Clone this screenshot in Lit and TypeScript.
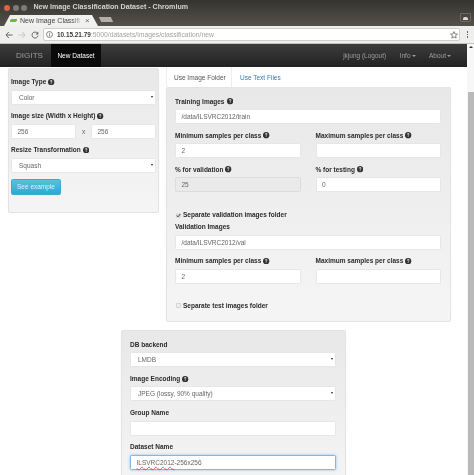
import { LitElement, html, css } from "lit";
import { customElement } from "lit/decorators.js";

const help = html`<svg class="help" viewBox="0 0 12 12"><circle cx="6" cy="6" r="6" fill="#333"/><path d="M3.900 4.700C3.900 3.400 4.800 2.600 6.100 2.600S8.200 3.400 8.200 4.500C8.200 6 6.700 6 6.700 7.200H5.300C5.300 5.400 6.800 5.400 6.800 4.600 6.800 4.200 6.500 3.900 6.100 3.900 5.600 3.900 5.300 4.200 5.300 4.700Z" fill="#f0f0f0"/><rect x="5.300" y="7.800" width="1.400" height="1.400" fill="#f0f0f0"/></svg>`;

@customElement("app-root")
export class AppRoot extends LitElement {
  static styles = css`
    :host { display: block; width: 474px; height: 475px; overflow: hidden; font-family: "Liberation Sans", Arial, sans-serif; background: #fff; color: #333; filter: blur(.3px); }
    * { box-sizing: border-box; }
    .chrome { height: 26px; background: linear-gradient(#35342f, #54524a); position: relative; }
    .title { height: 15px; display: flex; align-items: center; padding-left: 4px; gap: 2.500px; color: #d6d4ce; font: bold 7.100px/15px "Liberation Sans", sans-serif; }
    .dot { width: 6px; height: 6px; border-radius: 50%; background: #7d7c75; }
    .dot.close { background: #dc6440; }
    .title span { margin-left: 4px; white-space: nowrap; }
    .tabs { height: 11px; display: flex; align-items: flex-end; position: relative; }
    .tab { margin-left: 4px; width: 94px; height: 11px; background: #f1f1ef; clip-path: polygon(0 100%, 6px 0, calc(100% - 6px) 0, 100% 100%); display: flex; align-items: center; padding-left: 6px; color: #444; font: 7px/11px "Liberation Sans", sans-serif; white-space: nowrap; }
    .fav { width: 7px; height: 3.500px; background: #76b82a; border-radius: 2px 0 2px 0; margin-right: 3px; flex: none; }
    .tab .name { width: 64px; overflow: hidden; -webkit-mask-image: linear-gradient(90deg, #000 80%, transparent); mask-image: linear-gradient(90deg, #000 80%, transparent); }
    .tab .x { margin-left: 1px; color: #666; font-size: 8px; }
    .newtab { width: 12px; height: 5px; background: #b0afa9; margin: 0 0 4px 2px; transform: skewX(25deg); }
    .profile { position: absolute; right: 3px; top: -2px; width: 11px; height: 9px; border: 1px solid #6a6860; border-radius: 1px; display: flex; justify-content: center; align-items: flex-end; padding-bottom: 1px; }
    .profile i { width: 5px; height: 3px; background: #ddd; border-radius: 2px 2px 0 0; }
    .toolbar { height: 18px; background: #efefed; border-bottom: 1px solid #c2c2c0; display: flex; align-items: center; padding-left: 5px; gap: 5px; }
    .nav-ic { width: 8px; height: 8px; flex: none; }
    .addr { flex: 1; height: 13px; margin-left: -1px; background: #fff; border: 1px solid #cfcfcd; border-radius: 2px; display: flex; align-items: center; padding-left: 2px; font-size: 6.800px; color: #a3a3a3; white-space: nowrap; }
    .addr b { font: bold 6.400px "Liberation Sans", sans-serif; color: #3c3c3c; }
    .info { width: 7px; height: 7px; margin-right: 4px; flex: none; }
    .star { width: 8px; height: 8px; margin: 0 1px 0 auto; flex: none; }
    .menu { width: 14px; margin-left: -5px; padding-left: 1px; display: flex; flex-direction: column; align-items: center; gap: 1px; }
    .menu i { width: 1.500px; height: 1.500px; background: #666; }
    .viewport { display: flex; height: 431px; overflow: hidden; }
    .page { width: 467px; flex: none; }
    .scroll { flex: 1; background: #f7f7f7; position: relative; }
    .thumb { position: absolute; top: 48px; left: 1px; right: 0; bottom: 0; background: #b9b9b9; }
    .up { position: absolute; top: 2px; left: 1.500px; border: 2px solid transparent; border-bottom: 2.500px solid #333; border-top: 0; }
    .navbar { height: 23px; background: linear-gradient(#3c3c3c, #222); display: flex; align-items: stretch; font-size: 6.500px; color: #9d9d9d; white-space: nowrap; }
    .brand { font-size: 8.100px; padding: 0 8px 0 16px; display: flex; align-items: center; }
    .active { width: 50px; background: #0a0a0a; color: #fff; display: flex; align-items: center; justify-content: center; }
    .nav-r { margin-left: auto; display: flex; align-items: center; gap: 13.500px; padding-right: 16px; }
    .caret { display: inline-block; border: 2px solid transparent; border-top: 2px solid #9d9d9d; border-bottom: 0; margin-left: 1px; vertical-align: middle; }
    .top { display: flex; align-items: flex-start; padding-left: 8px; gap: 7px; }
    .well { background: linear-gradient(#e8e8e8, #f5f5f5); border: 1px solid #e3e3e3; border-radius: 2px; box-shadow: 0 1px 0 rgba(255,255,255,.6), 0 0 1px rgba(0,0,0,.08); }
    .left { width: 151px; height: 145px; margin-top: 1px; padding: 8px 2px 0 2px; }
    .right { width: 285px; }
    .lbl { display: flex; align-items: center; gap: 2px; height: 10px; font: bold 6.500px/10px "Liberation Sans", sans-serif; color: #2b2b2b; white-space: nowrap; }
    .help { width: 6.300px; height: 6.300px; flex: none; }
    .field { margin-bottom: 6.500px; }
    .field .ctl, .field .group { margin-top: 2.500px; }
    .ctl { height: 15px; background: #fff; border: 1px solid #e6e6e6; border-radius: 1.500px; display: flex; align-items: center; padding-left: 5.500px; font-size: 6.500px; color: #666; white-space: nowrap; }
    .ctl.sel { padding-left: 7px; position: relative; }
    .ctl.sel::after { content: ""; position: absolute; right: 2px; top: 5px; border: 1.500px solid transparent; border-top: 2.500px solid #222; border-bottom: 0; }
    .ctl.dis { background: #eaeaea; border-color: #dcdcdc; }
    .ctl.focus { border-color: #83b7e0; box-shadow: 0 0 3px rgba(102,175,233,.7); }
    .group { display: flex; }
    .group .ctl { flex: 1; margin-top: 0; }
    .addon { width: 15px; height: 15px; flex: none; background: #eee; display: flex; align-items: center; justify-content: center; font-size: 6.500px; color: #666; }
    .btn { margin-top: 1px; width: 50px; height: 15.500px; background: linear-gradient(#5bc0de, #2aabd2); border: 1px solid #3ca9cd; border-radius: 1.500px; color: #dff2f9; font-size: 6.500px; display: flex; align-items: center; justify-content: center; white-space: nowrap; }
    .tablist { display: flex; height: 20px; font-size: 6.500px; white-space: nowrap; }
    .t { display: flex; align-items: center; color: #337ab7; padding: 0 8px; }
    .t.on { color: #555; width: 66px; padding: 0 0 0 7px; background: #fff; border: 1px solid #eee; border-width: 0 1px; }
    .pane { padding: 8.500px 9px 10px 8px; }
    .pane .field { margin-bottom: 6.500px; }
    .pane .field.last { margin-bottom: 0; }
    .two { display: grid; grid-template-columns: 1fr 1fr; column-gap: 15px; }
    .chk { display: flex; align-items: center; gap: 2px; height: 10px; padding-left: 1px; font: bold 6.500px/10px "Liberation Sans", sans-serif; color: #2b2b2b; white-space: nowrap; }
    .box { width: 5px; height: 5px; flex: none; }
    .chk.val { margin-top: 18px; margin-bottom: 2px; }
    .chk.test { margin-top: 17px; }
    .lower { width: 225px; margin: 8px 0 0 121px; padding: 9px 9px 12px 8px; }
    .lower .field { margin-bottom: 6.800px; }
    .squig { text-decoration: underline wavy #d9534f .4px; }
  `;

  render() {
    return html`
      <div class="chrome">
        <div class="title"><i class="dot close"></i><i class="dot"></i><i class="dot"></i><span>New Image Classification Dataset - Chromium</span></div>
        <div class="tabs">
          <div class="tab"><i class="fav"></i><span class="name">New Image Classifi</span><span class="x">×</span></div>
          <div class="newtab"></div>
          <div class="profile"><i></i></div>
        </div>
      </div>
      <div class="toolbar">
        <svg class="nav-ic" viewBox="0 0 8 8"><path d="M7.500 4H1M3.800 1 1 4l2.800 3" fill="none" stroke="#666" stroke-width="1"/></svg>
        <svg class="nav-ic" viewBox="0 0 8 8"><path d="M.5 4H7M4.200 1 7 4 4.200 7" fill="none" stroke="#c6c6c6" stroke-width="1"/></svg>
        <svg class="nav-ic" viewBox="0 0 8 8"><path d="M6.500 2.300A3 3 0 1 0 7 4.600" fill="none" stroke="#666" stroke-width="1"/><path d="M7.300.6v2.800H4.500z" fill="#666"/></svg>
        <div class="addr">
          <svg class="info" viewBox="0 0 8 8"><circle cx="4" cy="4" r="3.400" fill="none" stroke="#555" stroke-width=".8"/><path d="M4 3.500v2.500M4 2v1" stroke="#555" stroke-width=".8"/></svg>
          <b>10.15.21.79</b>:5000/datasets/images/classification/new
          <svg class="star" viewBox="0 0 10 10"><path d="M5 .8l1.300 2.800 3 .3-2.300 2 .7 3L5 7.400 2.300 8.900l.7-3-2.300-2 3-.3z" fill="none" stroke="#555" stroke-width=".9"/></svg>
        </div>
        <div class="menu"><i></i><i></i><i></i></div>
      </div>
      <div class="viewport">
        <div class="page">
          <div class="navbar">
            <div class="brand">DIGITS</div>
            <div class="active">New Dataset</div>
            <div class="nav-r"><span>jkjung (Logout)</span><span>Info<i class="caret"></i></span><span>About<i class="caret"></i></span></div>
          </div>
          <div class="top">
            <div class="well left">
              <div class="field"><div class="lbl">Image Type ${help}</div><div class="ctl sel">Color</div></div>
              <div class="field"><div class="lbl">Image size (Width x Height) ${help}</div><div class="group"><div class="ctl">256</div><div class="addon">x</div><div class="ctl">256</div></div></div>
              <div class="field"><div class="lbl">Resize Transformation ${help}</div><div class="ctl sel">Squash</div></div>
              <div class="btn">See example</div>
            </div>
            <div class="right">
              <div class="tablist"><div class="t on">Use Image Folder</div><div class="t">Use Text Files</div></div>
              <div class="well pane">
                <div class="field"><div class="lbl">Training Images ${help}</div><div class="ctl">/data/ILSVRC2012/train</div></div>
                <div class="two">
                  <div class="field"><div class="lbl">Minimum samples per class ${help}</div><div class="ctl">2</div></div>
                  <div class="field"><div class="lbl">Maximum samples per class ${help}</div><div class="ctl"></div></div>
                </div>
                <div class="two">
                  <div class="field last"><div class="lbl">% for validation ${help}</div><div class="ctl dis">25</div></div>
                  <div class="field last"><div class="lbl">% for testing ${help}</div><div class="ctl">0</div></div>
                </div>
                <div class="chk val"><svg class="box" viewBox="0 0 5 5"><rect width="5" height="5" rx=".6" fill="#ddd"/><path d="M.8 2.500 2 3.900 4.300 1" fill="none" stroke="#444" stroke-width="1"/></svg>Separate validation images folder</div>
                <div class="field"><div class="lbl">Validation Images</div><div class="ctl">/data/ILSVRC2012/val</div></div>
                <div class="two">
                  <div class="field last"><div class="lbl">Minimum samples per class ${help}</div><div class="ctl">2</div></div>
                  <div class="field last"><div class="lbl">Maximum samples per class ${help}</div><div class="ctl"></div></div>
                </div>
                <div class="chk test"><svg class="box" viewBox="0 0 5 5"><rect x=".4" y=".4" width="4.200" height="4.200" rx=".6" fill="#eee" stroke="#c4c4c4" stroke-width=".7"/></svg>Separate test images folder</div>
              </div>
            </div>
          </div>
          <div class="well lower">
            <div class="field"><div class="lbl">DB backend</div><div class="ctl sel">LMDB</div></div>
            <div class="field"><div class="lbl">Image Encoding ${help}</div><div class="ctl sel">JPEG (lossy, 90% quality)</div></div>
            <div class="field"><div class="lbl">Group Name</div><div class="ctl"></div></div>
            <div class="field"><div class="lbl">Dataset Name</div><div class="ctl focus"><span class="squig">ILSVRC2012</span>-256x256</div></div>
          </div>
        </div>
        <div class="scroll"><div class="up"></div><div class="thumb"></div></div>
      </div>
    `;
  }
}
